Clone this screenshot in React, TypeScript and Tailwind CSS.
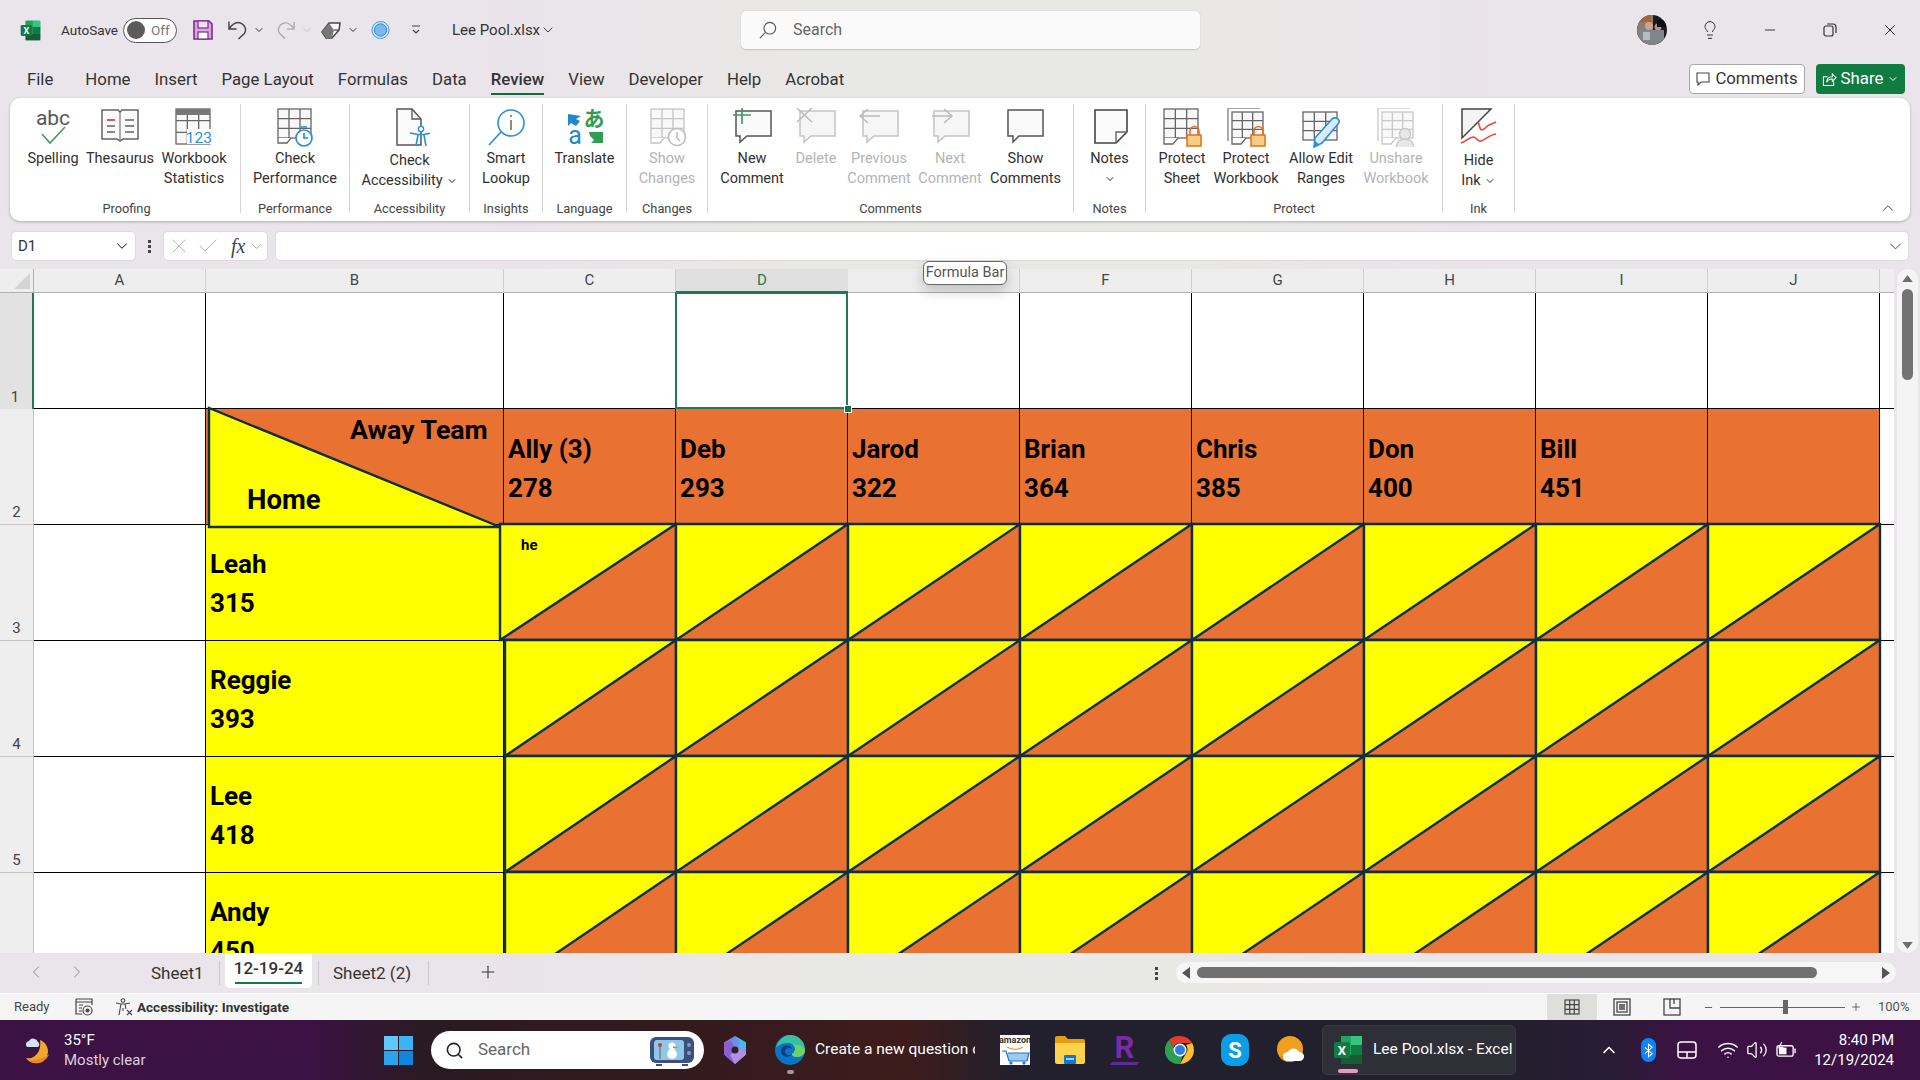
import React from 'react';
import { ChevronDown, ChevronLeft, ChevronRight, ChevronUp, Plus, Minus, X, Check, Wifi, Volume2, Search, Lightbulb } from 'lucide-react';

const DARK = '#10303f';
const ORANGE = '#e97132';
const YELLOW = '#ffff00';

function Icon({ children }: { children: React.ReactNode }) {
  return (
    <svg viewBox="0 0 40 40" className="w-[40px] h-[40px] shrink-0" fill="none">
      {children}
    </svg>
  );
}

function Tbl({ x, y, w, h, c = '#666', fill = '#f8f8f8' }: { x: number; y: number; w: number; h: number; c?: string; fill?: string }) {
  return (
    <g stroke={c} strokeWidth="1.3" fill="none">
      <rect x={x} y={y} width={w} height={h} fill={fill} />
      <path d={`M${x + w / 3} ${y}v${h}M${x + (2 * w) / 3} ${y}v${h}M${x} ${y + h / 3}h${w}M${x} ${y + (2 * h) / 3}h${w}`} />
    </g>
  );
}

function Lock() {
  return (
    <g transform="translate(1.5 1)">
      <path d="M26.5 26v-4a4.5 4.5 0 0 1 9 0v4" stroke="#e0701c" strokeWidth="1.6" />
      <rect x="23.5" y="26" width="14" height="11" fill="#f7cd85" stroke="#e0701c" strokeWidth="1.5" />
    </g>
  );
}

const BUBBLE = 'M4 3h35v25H15l-7 6v-6H4z';

const icons: Record<string, React.ReactNode> = {
  spelling: (
    <Icon>
      <text x="20" y="17" textAnchor="middle" fontSize="21" fill="#555" fontFamily="Roboto, sans-serif">abc</text>
      <path d="M9 26l8 9 15-16" stroke="#3f9b5e" strokeWidth="1.6" />
    </Icon>
  ),
  thesaurus: (
    <Icon>
      <path d="M2 2h16l2 2 2-2h16v29H23l-3 2-3-2H2z" stroke="#666" strokeWidth="1.5" fill="#fbfbfb" />
      <path d="M20 4v28" stroke="#777" strokeWidth="1.2" />
      <path d="M7 12h8" stroke="#e2555b" strokeWidth="2" />
      <path d="M7 18h8M7 24h8M25 12h9M25 18h9M25 24h9" stroke="#888" strokeWidth="2" />
    </Icon>
  ),
  stats: (
    <Icon>
      <Tbl x={2} y={1} w={34} h={35} />
      <rect x="2" y="1" width="34" height="6" fill="#777" />
      <rect x="13" y="21" width="25" height="15" fill="#fff" />
      <text x="38" y="35" textAnchor="end" fontSize="15.500" fill="#2b8fd6" fontFamily="Roboto, sans-serif">123</text>
    </Icon>
  ),
  perf: (
    <Icon>
      <Tbl x={3} y={1} w={33} h={29} />
      <path d="M3 30v5h9l4-5" stroke="#666" strokeWidth="1.3" fill="#fff" />
      <circle cx="29" cy="30" r="8" stroke="#2b8fd6" strokeWidth="1.7" fill="#fff" />
      <path d="M29 25v5h4M26 19h6" stroke="#2b8fd6" strokeWidth="1.7" />
    </Icon>
  ),
  access: (
    <Icon>
      <path d="M7 1h15l9 10v26H7z" stroke="#555" strokeWidth="1.5" fill="#fbfbfb" />
      <path d="M22 1v10h9" stroke="#555" strokeWidth="1.3" />
      <circle cx="31" cy="21" r="2.600" stroke="#2b8fd6" strokeWidth="1.4" fill="#fff" />
      <path d="M20 25l8 1.500h6l7-1.500M28 27l-2 11M34 27l2 11M31 31v3" stroke="#2b8fd6" strokeWidth="1.6" />
    </Icon>
  ),
  lookup: (
    <Icon>
      <circle cx="25" cy="15" r="13" stroke="#2b8fd6" strokeWidth="1.6" fill="#fff" />
      <path d="M15 24L3 37" stroke="#2b8fd6" strokeWidth="1.7" />
      <path d="M25 12v10" stroke="#666" strokeWidth="1.5" />
      <circle cx="25" cy="8" r="1" fill="#666" />
    </Icon>
  ),
  translate: (
    <Icon>
      <path d="M16 8L3 6v12l3-3 5 3 4-5-4-2z" fill="#1f86d0" />
      <text x="29" y="18" textAnchor="middle" fontSize="21" fontWeight="700" fill="#2f9e52" fontFamily="Noto Sans CJK JP, sans-serif">あ</text>
      <text x="10" y="36" textAnchor="middle" fontSize="25" fill="#1f86d0" fontFamily="Roboto, sans-serif">a</text>
      <path d="M24 24h14v11H26l3-3-4-4z" fill="#2f9e52" />
    </Icon>
  ),
  changes: (
    <Icon>
      <Tbl x={4} y={1} w={33} h={29} c="#c4c4c4" />
      <path d="M4 30v5h9l4-5" stroke="#c4c4c4" strokeWidth="1.3" fill="#fff" />
      <circle cx="30" cy="29" r="8.500" stroke="#bdbdbd" strokeWidth="1.6" fill="#fff" />
      <path d="M30 24v6l3 3" stroke="#bdbdbd" strokeWidth="1.5" />
    </Icon>
  ),
  newc: (
    <Icon>
      <path d={BUBBLE} stroke="#555" strokeWidth="1.5" fill="#fafafa" />
      <path d="M10 -1v17M1 7h18" stroke="#3f9b5e" strokeWidth="1.7" />
    </Icon>
  ),
  del: (
    <Icon>
      <path d={BUBBLE} stroke="#c4c4c4" strokeWidth="1.5" fill="#f6f6f6" />
      <path d="M1 0l15 14M16 0L1 14" stroke="#bbb" strokeWidth="1.5" />
    </Icon>
  ),
  prev: (
    <Icon>
      <path d={BUBBLE} stroke="#c4c4c4" strokeWidth="1.5" fill="#f6f6f6" />
      <path d="M21 8H1M9 1L1 8l8 7" stroke="#bbb" strokeWidth="1.5" />
    </Icon>
  ),
  next: (
    <Icon>
      <path d={BUBBLE} stroke="#c4c4c4" strokeWidth="1.5" fill="#f6f6f6" />
      <path d="M2 8h20M14 1l8 7-8 7" stroke="#bbb" strokeWidth="1.5" />
    </Icon>
  ),
  show: (
    <Icon>
      <path d="M2 2h35v26H13l-6 6v-6H2z" stroke="#555" strokeWidth="1.5" fill="#fafafa" />
    </Icon>
  ),
  notes: (
    <Icon>
      <path d="M5 2h32v22L26 35H5z" stroke="#444" strokeWidth="1.6" fill="#fbfbfb" />
      <path d="M37 24H26v11" stroke="#666" strokeWidth="1.4" />
    </Icon>
  ),
  psheet: (
    <Icon>
      <Tbl x={2} y={1} w={34} h={29} />
      <path d="M2 30v6h9l5-6" stroke="#666" strokeWidth="1.3" fill="#fff" />
      <Lock />
    </Icon>
  ),
  pbook: (
    <Icon>
      <path d="M2 33V0h32" stroke="#888" strokeWidth="1.4" />
      <Tbl x={6} y={4} w={31} h={26} />
      <path d="M6 30v6h9l5-6" stroke="#666" strokeWidth="1.3" fill="#fff" />
      <Lock />
    </Icon>
  ),
  ranges: (
    <Icon>
      <Tbl x={2} y={4} w={34} h={28} />
      <path d="M13 39l1-9 17-19c2-2 5-1 6 0s2 3 0 5L21 35z" fill="#d8ecfa" stroke="#2b8fd6" strokeWidth="1.6" />
      <path d="M13 39l1-6 5 4z" fill="#2b8fd6" />
    </Icon>
  ),
  unshare: (
    <Icon>
      <path d="M2 33V0h32" stroke="#ccc" strokeWidth="1.4" />
      <Tbl x={6} y={4} w={31} h={26} c="#c8c8c8" />
      <path d="M6 30v6h9l5-6" stroke="#c8c8c8" strokeWidth="1.3" fill="#fff" />
      <circle cx="29" cy="26" r="5.500" fill="#e8e8e8" stroke="#c8c8c8" strokeWidth="1.4" />
      <path d="M20 39c1-6 4-8 9-8s8 2 9 8" fill="#e8e8e8" stroke="#c8c8c8" strokeWidth="1.4" />
    </Icon>
  ),
  ink: (
    <Icon>
      <path d="M3 1h29L3 30z" fill="#f4f4f4" stroke="#444" strokeWidth="1.5" />
      <path d="M19 14c2 3 1 8 4 8s4-4 7-5 5-2 7-3" stroke="#e8483c" strokeWidth="1.6" />
      <path d="M2 35c5-1 8-6 12-6s4 5 8 4 8-6 15-7" stroke="#e8483c" strokeWidth="1.6" />
    </Icon>
  ),
};

type RibbonItem = { icon: string; lines: string[]; w: string; off?: boolean; chev?: boolean; low?: boolean; chevLine?: boolean };
type RibbonGroup = { label: string; w: string; pl?: string; labelPad?: string; items: RibbonItem[] };

const groups: RibbonGroup[] = [
  {
    label: 'Proofing', w: 'w-[231px]', pl: 'pl-[10px]', labelPad: 'pr-[7px]',
    items: [
      { icon: 'spelling', lines: ['Spelling'], w: 'w-[66px]' },
      { icon: 'thesaurus', lines: ['Thesaurus'], w: 'w-[68px]' },
      { icon: 'stats', lines: ['Workbook', 'Statistics'], w: 'w-[80px]' },
    ],
  },
  { label: 'Performance', w: 'w-[109px]', items: [{ icon: 'perf', lines: ['Check', 'Performance'], w: 'w-[108px]' }] },
  { label: 'Accessibility', w: 'w-[120px]', items: [{ icon: 'access', lines: ['Check', 'Accessibility'], w: 'w-[119px]', chev: true, low: true }] },
  { label: 'Insights', w: 'w-[73px]', items: [{ icon: 'lookup', lines: ['Smart', 'Lookup'], w: 'w-[72px]' }] },
  { label: 'Language', w: 'w-[84px]', items: [{ icon: 'translate', lines: ['Translate'], w: 'w-[83px]' }] },
  { label: 'Changes', w: 'w-[81px]', items: [{ icon: 'changes', lines: ['Show', 'Changes'], w: 'w-[80px]', off: true }] },
  {
    label: 'Comments', w: 'w-[366px]',
    items: [
      { icon: 'newc', lines: ['New', 'Comment'], w: 'w-[88px]' },
      { icon: 'del', lines: ['Delete'], w: 'w-[40px]', off: true },
      { icon: 'prev', lines: ['Previous', 'Comment'], w: 'w-[86px]', off: true },
      { icon: 'next', lines: ['Next', 'Comment'], w: 'w-[56px]', off: true },
      { icon: 'show', lines: ['Show', 'Comments'], w: 'w-[95px]' },
    ],
  },
  { label: 'Notes', w: 'w-[72px]', items: [{ icon: 'notes', lines: ['Notes'], w: 'w-[71px]', chevLine: true }] },
  {
    label: 'Protect', w: 'w-[297px]',
    items: [
      { icon: 'psheet', lines: ['Protect', 'Sheet'], w: 'w-[72px]' },
      { icon: 'pbook', lines: ['Protect', 'Workbook'], w: 'w-[56px]' },
      { icon: 'ranges', lines: ['Allow Edit', 'Ranges'], w: 'w-[94px]' },
      { icon: 'unshare', lines: ['Unshare', 'Workbook'], w: 'w-[56px]', off: true },
    ],
  },
  { label: 'Ink', w: 'w-[72px]', items: [{ icon: 'ink', lines: ['Hide', 'Ink'], w: 'w-[71px]', chev: true, low: true }] },
];

function Ribbon() {
  return (
    <div className="mx-[10px] h-[123px] rounded-[10px] bg-white shadow-[0_1px_3px_rgba(0,0,0,0.25)] flex items-start">
      {groups.map((g) => (
        <div key={g.label} className={`${g.w} ${g.pl ?? ''} shrink-0 mt-[6px] h-[109px] border-r border-[#d4d4d4] flex flex-col`}>
          <div className="h-[95px] flex items-start">
            {g.items.map((it) => (
              <div key={it.icon} className={`${it.w} shrink-0 flex flex-col items-center pt-[4px]`}>
                {icons[it.icon]}
                <div className={`${it.low ? 'mt-[3px]' : 'mt-[1px]'} flex flex-col items-center whitespace-nowrap text-[14.5px] leading-[20px] ${it.off ? 'text-[#b4b4b4]' : 'text-[#303030]'}`}>
                  {it.lines.map((l, i) => (
                    <span key={l} className="flex items-center gap-[3px]">
                      {l}
                      {it.chev && i === it.lines.length - 1 && <ChevronDown size={12} strokeWidth={2} />}
                    </span>
                  ))}
                  {it.chevLine && <ChevronDown size={12} strokeWidth={2} className="mt-[4px] text-[#303030]" />}
                </div>
              </div>
            ))}
          </div>
          <div className={`${g.labelPad ?? ''} h-[14px] leading-[20px] text-center text-[12.800px] text-[#444] whitespace-nowrap`}>{g.label}</div>
        </div>
      ))}
      <ChevronUp size={18} strokeWidth={1.3} className="ml-auto mr-[13px] mt-[101px] text-[#444]" />
    </div>
  );
}

function ExcelLogo({ big }: { big?: boolean }) {
  return (
    <svg viewBox="0 0 30 30" className={big ? 'w-[30px] h-[30px]' : 'w-[21px] h-[21px]'}>
      <rect x="8" y="1" width="21" height="28" rx="2" fill="#21a366" />
      <rect x="18" y="1" width="11" height="9" fill="#33c481" />
      <rect x="8" y="1" width="10" height="9" fill="#21a366" />
      <rect x="18" y="10" width="11" height="10" fill="#107c41" />
      <rect x="8" y="20" width="21" height="9" fill="#185c37" />
      <rect x="1" y="7" width="16" height="16" rx="2" fill="#107c41" />
      <text x="9" y="20" textAnchor="middle" fontSize="13" fontWeight="700" fill="#fff" fontFamily="Roboto, sans-serif">X</text>
    </svg>
  );
}

function TitleBar() {
  return (
    <div className="h-[60px] flex items-center pl-[20px] text-[#333]">
      <ExcelLogo />
      <span className="ml-[20px] w-[54px] text-[13.500px] whitespace-nowrap">AutoSave</span>
      <div className="ml-[8px] w-[54px] h-[25px] rounded-full border border-[#555] bg-white flex items-center pl-[3px] gap-[6px]">
        <span className="w-[18px] h-[18px] rounded-full bg-[#5c5c5c]" />
        <span className="text-[13.500px] text-[#777]">Off</span>
      </div>
      <svg viewBox="0 0 20 20" className="ml-[16px] w-[20px] h-[20px]">
        <path d="M1 1h15l3 3v15H1z" fill="#d8a8df" stroke="#80278f" strokeWidth="1.6" />
        <rect x="5" y="1" width="10" height="7" fill="#f3dff5" stroke="#80278f" strokeWidth="1.2" />
        <rect x="5" y="12" width="10" height="7" fill="#fff" stroke="#80278f" strokeWidth="1.2" />
      </svg>
      <svg viewBox="0 0 20 20" className="ml-[15px] w-[19px] h-[20px]" fill="none" stroke="#444" strokeWidth="1.5">
        <path d="M1 1v8h8M1 9c4-6 9-8 13-6s6 7 3 11l-6 5.500" />
      </svg>
      <ChevronDown size={12} strokeWidth={2} className="ml-[6px]" />
      <svg viewBox="0 0 20 20" className="ml-[12px] w-[18px] h-[20px]" fill="none" stroke="#aaa" strokeWidth="1.5">
        <path d="M19 1v8h-8M19 9c-4-6-9-8-13-6S0 10 3 14l6 5.500" />
      </svg>
      <ChevronDown size={12} strokeWidth={2} className="ml-[6px] text-[#c4c4c4]" />
      <svg viewBox="0 0 20 20" className="ml-[8px] w-[20px] h-[20px]">
        <path d="M8 3h11l-1 7-7 8H5L1 12z" fill="#fff" stroke="#444" strokeWidth="1.5" />
        <path d="M8 3L1 12l4 6h6l2-8z" fill="#777" />
        <path d="M13 10h5" fill="none" stroke="#444" strokeWidth="1.200" />
      </svg>
      <ChevronDown size={12} strokeWidth={2} className="ml-[6px]" />
      <svg viewBox="0 0 20 20" className="ml-[12px] w-[19px] h-[20px]">
        <circle cx="10" cy="10" r="9" fill="#cfe6f8" stroke="#3a96dd" strokeWidth="1" />
        <circle cx="10" cy="10" r="6.500" fill="#7cb8ea" stroke="#2b88d8" strokeWidth="1" />
      </svg>
      <svg viewBox="0 0 12 12" className="ml-[20px] w-[12px] h-[12px]" fill="none" stroke="#444" strokeWidth="1.2">
        <path d="M2 2h8M3 6l3 3 3-3" />
      </svg>
      <span className="ml-[30px] w-[83px] text-[15px] whitespace-nowrap">Lee Pool.xlsx</span>
      <ChevronDown size={16} strokeWidth={1.4} className="ml-[5px]" />
      <div className="ml-[185px] w-[459px] h-[39px] rounded-[5px] bg-white/80 border-b border-[#c8c8c8] shadow-[0_0_1px_rgba(0,0,0,0.3)] flex items-center pl-[18px]">
        <svg viewBox="0 0 20 20" className="w-[18px] h-[18px]" fill="none" stroke="#555" strokeWidth="1.2">
          <circle cx="12" cy="8" r="6.500" />
          <path d="M7 13L1 19" />
        </svg>
        <span className="ml-[16px] text-[16px] text-[#666]">Search</span>
      </div>
      <svg viewBox="0 0 30 30" className="ml-auto w-[30px] h-[30px]">
        <clipPath id="av"><circle cx="15" cy="15" r="15" /></clipPath>
        <g clipPath="url(#av)">
          <rect width="30" height="30" fill="#1c1c22" />
          <rect width="16" height="30" fill="#8a7d72" />
          <rect x="0" y="0" width="14" height="7" fill="#a8643c" />
          <circle cx="12" cy="11" r="4" fill="#c9a58a" />
          <circle cx="21" cy="12" r="3.500" fill="#b9937a" />
          <rect x="3" y="15" width="24" height="15" fill="#7f858a" />
          <rect x="6" y="17" width="7" height="8" fill="#b7bcc0" />
          <rect x="20" y="5" width="9" height="7" fill="#0c0c14" />
        </g>
      </svg>
      <Lightbulb size={20} strokeWidth={1.2} className="ml-[33px]" />
      <Minus size={16} strokeWidth={1.3} className="ml-[42px] text-[#222]" />
      <svg viewBox="0 0 14 14" className="ml-[45px] w-[14px] h-[14px]" fill="none" stroke="#333" strokeWidth="1.2">
        <rect x="1" y="3" width="9" height="10" rx="2" />
        <path d="M4 1h6a3 3 0 0 1 3 3v6" />
      </svg>
      <X size={18} strokeWidth={1.3} className="ml-[44px] mr-[21px] text-[#222]" />
    </div>
  );
}

const tabs = ['Home', 'Insert', 'Page Layout', 'Formulas', 'Data', 'Review', 'View', 'Developer', 'Help', 'Acrobat'];

function TabRow() {
  return (
    <div className="h-[38px] flex items-start pl-[27px] pr-[15px] text-[16.800px] text-[#333]">
      <div className="h-[35px] pt-[6px] leading-[27px] mr-[32px] border-b-2 border-transparent">File</div>
      <div className="flex gap-[24px]">
        {tabs.map((t) => (
          <div key={t} className={`h-[35px] pt-[6px] leading-[27px] whitespace-nowrap border-b-2 ${t === 'Review' ? 'border-[#0f6b3f] font-medium' : 'border-transparent'}`}>
            {t}
          </div>
        ))}
      </div>
      <div className="ml-auto mt-[4px] w-[116px] h-[30px] rounded-[4px] bg-white border border-[#a8a8a8] flex items-center justify-center gap-[5px]">
        <svg viewBox="0 0 14 14" className="w-[14px] h-[14px]" fill="none" stroke="#444" strokeWidth="1.1">
          <path d="M1 1h12v9H5l-3 3v-3H1z" />
        </svg>
        Comments
      </div>
      <div className="ml-[11px] mt-[4px] w-[89px] h-[30px] rounded-[4px] bg-[#107c41] text-white flex items-center justify-center gap-[4px]">
        <svg viewBox="0 0 16 16" className="w-[15px] h-[15px]" fill="none" stroke="#fff" strokeWidth="1.1">
          <path d="M6 5H1.500v9.500h11V10M5 11c0-4 2.500-6 6-6V2l4 4-4 4V7.500c-3 0-5 1-6 3.500z" />
        </svg>
        Share
        <ChevronDown size={12} strokeWidth={2} />
      </div>
    </div>
  );
}

function FormulaBar() {
  return (
    <div className="mt-[10px] h-[30px] flex pl-[11px]">
      <div className="w-[125px] rounded-[5px] bg-white border border-[#dcdcdc] flex items-center pl-[6px] pr-[4px] text-[15px] text-[#333]">
        D1
        <ChevronDown size={18} strokeWidth={1.4} className="ml-auto" />
      </div>
      <div className="w-[27px] flex flex-col items-center justify-center gap-[2px]">
        <span className="w-[3px] h-[3px] bg-[#444]" />
        <span className="w-[3px] h-[3px] bg-[#444]" />
        <span className="w-[3px] h-[3px] bg-[#444]" />
      </div>
      <div className="w-[105px] rounded-[5px] bg-white border border-[#dcdcdc] flex items-center pl-[3px] text-[#b5b5b5]">
        <X size={24} strokeWidth={1} />
        <Check size={24} strokeWidth={1} className="ml-[5px]" />
        <span className="ml-[11px] text-[20px] text-[#444] italic [font-family:'Liberation_Serif',serif]">fx</span>
        <ChevronDown size={15} strokeWidth={1.2} className="ml-[4px] text-[#888]" />
      </div>
      <div className="ml-[7px] w-[1634px] rounded-[5px] bg-white border border-[#dcdcdc] flex items-center justify-end pr-[3px]">
        <ChevronDown size={19} strokeWidth={1.2} className="text-[#444]" />
      </div>
    </div>
  );
}

function Tri({ className }: { className: string }) {
  return (
    <svg viewBox="0 0 172 116" preserveAspectRatio="none" className={`absolute -top-[1px] h-[116px] overflow-visible ${className}`}>
      <rect width="172" height="116" fill={ORANGE} />
      <polygon points="0,116 0,0 172,0" fill={YELLOW} />
      <path d="M0 0H172V116H0ZM0 116L172 0" fill="none" stroke={DARK} strokeWidth="2.400" />
    </svg>
  );
}

const columns = ['A', 'B', 'C', 'D', 'E', 'F', 'G', 'H', 'I', 'J'];
const home = [
  ['Ally (3)', '278'], ['Deb', '293'], ['Jarod', '322'], ['Brian', '364'],
  ['Chris', '385'], ['Don', '400'], ['Bill', '451'], null,
];
const away: [string, string, string][] = [
  ['3', 'Leah', '315'], ['4', 'Reggie', '393'], ['5', 'Lee', '418'], ['6', 'Andy', '450'],
];

function Sheet() {
  return (
    <div className="w-[1894px] h-[684px] overflow-hidden grid grid-cols-[34px_172px_298px_172px_172px_172px_172px_172px_172px_172px_172px_14px] grid-rows-[24px_116px_116px_116px_116px_116px_116px] bg-white">
      <div className="bg-[#eeeeee] border-b border-r border-[#b0b0b0] flex items-end justify-end pb-[3px] pr-[3px]">
        <svg viewBox="0 0 16 16" className="w-[16px] h-[16px]"><polygon points="16,0 16,16 0,16" fill="#d4d4d4" /></svg>
      </div>
      {columns.map((c) => (
        <div key={c} className={`text-[15px] text-center leading-[23px] ${c === 'D' ? 'bg-[#e0e0e0] text-[#1f7a4f] border-b-2 border-[#1f7a4f]' : 'bg-[#eeeeee] text-[#444] border-b border-r border-b-[#b0b0b0] border-r-[#cfcfcf]'}`}>
          {c}
        </div>
      ))}
      <div className="bg-[#eeeeee] border-b border-[#b0b0b0]" />

      <div className="bg-[#e2e2e2] border-r-2 border-[#1f7a4f] text-[15px] text-[#444] flex items-end justify-center pb-[1px] pr-[2px]">1</div>
      <div className="border-r border-b border-black" />
      <div className="border-r border-b border-black" />
      <div className="border-r border-b border-black" />
      <div className="relative border-r border-b border-black">
        <div className="absolute -left-[1px] -top-[1px] -right-[1px] -bottom-[1px] border-2 border-[#1f7a4f]" />
        <div className="absolute -right-[4px] -bottom-[4px] w-[6px] h-[6px] bg-[#1f6b46] outline outline-1 outline-white" />
      </div>
      {['E', 'F', 'G', 'H', 'I', 'J'].map((c) => (
        <div key={c} className="border-r border-b border-black" />
      ))}
      <div className="border-b border-black" />

      <div className="bg-[#eeeeee] border-r border-b border-[#c4c4c4] text-[15px] text-[#444] flex items-end justify-center pb-[1px]">2</div>
      <div className="border-r border-b border-black" />
      <div className="relative border-r border-b border-black bg-[#e97132]">
        <svg viewBox="0 0 298 116" className="absolute left-0 top-0 w-[298px] h-[116px] overflow-visible">
          <polygon points="3,-1 3,118 294,118" fill={YELLOW} stroke={DARK} strokeWidth="2.400" />
        </svg>
        <span className="absolute left-[144px] top-[6px] text-[26.700px] leading-[30px] font-bold whitespace-nowrap text-black">Away Team</span>
        <span className="absolute left-[41px] top-[76px] text-[27.500px] leading-[30px] font-bold text-black">Home</span>
      </div>
      {home.map((h, i) => (
        <div key={i} className="bg-[#e97132] border-r border-b border-black pl-[4px] pt-[21px] text-[26px] leading-[38.500px] font-bold text-black whitespace-nowrap">
          {h && (
            <>
              <div>{h[0]}</div>
              <div>{h[1]}</div>
            </>
          )}
        </div>
      ))}
      <div className="border-b border-black" />

      {away.map(([row, name, score]) => (
        <React.Fragment key={row}>
          <div className="bg-[#eeeeee] border-r border-b border-[#c4c4c4] text-[15px] text-[#444] flex items-end justify-center pb-[1px]">{row}</div>
          <div className="border-r border-b border-black" />
          <div className="bg-[#ffff00] border-r border-b border-black pl-[4px] pt-[20px] text-[26px] leading-[38.500px] font-bold text-black">
            <div>{name}</div>
            <div>{score}</div>
          </div>
          {home.map((_, i) => (
            <div key={i} className="relative">
              <Tri className={i === 0 ? (row === '3' ? '-left-[4px] w-[176px]' : 'left-[1px] w-[171px]') : 'left-0 w-[172px]'} />
              {i === 0 && row === '3' && <span className="absolute left-[17px] top-[9px] text-[15px] font-bold text-black">he</span>}
            </div>
          ))}
          <div className="border-b border-black" />
        </React.Fragment>
      ))}
    </div>
  );
}

function VScroll() {
  return (
    <div className="w-[26px] pl-[3px] h-[684px]">
      <div className="w-[21px] h-full rounded-full bg-[#f4f4f4] flex flex-col items-center pt-[6px] pb-[4px]">
        <svg viewBox="0 0 12 8" className="w-[11px] h-[7px]"><polygon points="6,0 12,8 0,8" fill="#6e6e6e" /></svg>
        <div className="mt-[7px] w-[11px] h-[91px] rounded-full bg-[#737373]" />
        <svg viewBox="0 0 12 8" className="mt-auto w-[11px] h-[7px]"><polygon points="0,0 12,0 6,8" fill="#6e6e6e" /></svg>
      </div>
    </div>
  );
}

function SheetTabs() {
  return (
    <div className="h-[40px] flex items-start text-[17px] text-[#333]">
      <ChevronLeft size={20} strokeWidth={1.2} className="ml-[26px] mt-[9px] text-[#888]" />
      <ChevronRight size={20} strokeWidth={1.2} className="ml-[21px] mt-[9px] text-[#888]" />
      <span className="ml-[64px] mt-[7px] w-[53px] leading-[26px] whitespace-nowrap">Sheet1</span>
      <span className="ml-[15px] mt-[8px] w-px h-[24px] bg-[#c8c8c8]" />
      <div className="ml-[5px] w-[87px] h-[35px] rounded-b-[5px] bg-white flex flex-col items-center pt-[4px]">
        <span className="leading-[22px] whitespace-nowrap font-medium">12-19-24</span>
        <span className="mt-[3px] w-[67px] h-[2px] bg-[#107c41]" />
      </div>
      <span className="ml-[6px] mt-[8px] w-px h-[24px] bg-[#c8c8c8]" />
      <span className="ml-[14px] mt-[7px] w-[78px] leading-[26px] whitespace-nowrap">Sheet2 (2)</span>
      <span className="ml-[17px] mt-[8px] w-px h-[24px] bg-[#c8c8c8]" />
      <Plus size={20} strokeWidth={1.3} className="ml-[49px] mt-[9px]" />
      <div className="ml-[657px] mt-[14px] flex flex-col gap-[2px]">
        <span className="w-[3px] h-[3px] bg-[#444]" />
        <span className="w-[3px] h-[3px] bg-[#444]" />
        <span className="w-[3px] h-[3px] bg-[#444]" />
      </div>
      <div className="ml-[18px] mt-[9px] w-[720px] h-[21px] rounded-full bg-[#f6f6f6] flex items-center pl-[6px]">
        <svg viewBox="0 0 8 12" className="w-[8px] h-[12px]"><polygon points="8,0 8,12 0,6" fill="#555" /></svg>
        <div className="ml-[7px] w-[620px] h-[11px] rounded-full bg-[#707070]" />
        <svg viewBox="0 0 8 12" className="ml-[65px] w-[8px] h-[12px]"><polygon points="0,0 0,12 8,6" fill="#555" /></svg>
      </div>
    </div>
  );
}

function StatusBar() {
  return (
    <div className="h-[27px] bg-[#f5f5f5] border-t border-white flex items-center pl-[14px] text-[#444] text-[13px]">
      <span className="w-[36px]">Ready</span>
      <svg viewBox="0 0 18 18" className="ml-[25px] w-[18px] h-[18px]" fill="none" stroke="#444" strokeWidth="1.2">
        <path d="M1 1h16v6M1 4h16M1 1v15h6" />
        <path d="M4 7h4M4 10h3M4 13h3" />
        <circle cx="12.500" cy="12.500" r="4.500" />
        <circle cx="12.500" cy="12.500" r="1.500" fill="#444" />
      </svg>
      <svg viewBox="0 0 18 18" className="ml-[22px] w-[18px] h-[18px]" fill="none" stroke="#444" strokeWidth="1.1">
        <circle cx="8" cy="2.500" r="1.800" />
        <path d="M1 5l5 1h4l5-1M6 6L4 17M10 6l1 5M8 10v3" />
        <path d="M12 12l5 5M17 12l-5 5" />
      </svg>
      <span className="ml-[4px] font-bold text-[13.500px] text-[#333] whitespace-nowrap">Accessibility: Investigate</span>
      <div className="ml-auto flex items-center h-full">
        <div className="w-[50px] h-full bg-[#dededc] flex items-center justify-center">
          <svg viewBox="0 0 16 16" className="w-[16px] h-[16px]" fill="none" stroke="#444" strokeWidth="1.2">
            <rect x="1" y="1" width="14" height="14" />
            <path d="M5.700 1v14M10.300 1v14M1 5.700h14M1 10.300h14" />
          </svg>
        </div>
        <svg viewBox="0 0 18 18" className="ml-[16px] w-[18px] h-[18px]" fill="none" stroke="#444" strokeWidth="1.3">
          <rect x="1" y="1" width="16" height="16" />
          <rect x="4" y="4" width="10" height="10" />
          <path d="M6 7h6M6 9h6M6 11h6" />
        </svg>
        <svg viewBox="0 0 18 18" className="ml-[32px] w-[18px] h-[18px]" fill="none" stroke="#444" strokeWidth="1.3">
          <rect x="1" y="1" width="16" height="16" />
          <path d="M7 1v9h10M11 1v5" />
        </svg>
        <Minus size={11} strokeWidth={1.8} className="ml-[22px]" />
        <div className="ml-[6px] w-[125px] h-[14px] flex items-center">
          <span className="w-[63px] h-px bg-[#666]" />
          <span className="w-[5px] h-[14px] bg-[#666]" />
          <span className="w-[57px] h-px bg-[#666]" />
        </div>
        <Plus size={12} strokeWidth={1.5} className="ml-[5px]" />
        <span className="ml-[16px] mr-[11px] w-[31px] text-[13px] text-[#555]">100%</span>
      </div>
    </div>
  );
}

function Taskbar() {
  return (
    <div className="h-[60px] bg-[linear-gradient(90deg,#3c1244_0%,#3c1244_16%,#2a1a22_22%,#331a1e_35%,#3e1c1c_47%,#22202c_53%,#22202c_78%,#2a1c36_84%,#3c1244_88%,#3c1244_100%)] flex items-center text-white">
      <svg viewBox="0 0 30 28" className="ml-[24px] w-[30px] h-[28px]">
        <path d="M16 4a12 12 0 1 1-14 18c8 2 16-6 14-18z" fill="#f0a82a" />
        <path d="M4 24c5 1 15-1 21-6-2 6-8 10-14 9-3 0-5-1-7-3z" fill="#e8862a" />
        <path d="M3 11a3.500 3.500 0 0 1 2-6 5 5 0 0 1 9 1 3 3 0 0 1 0 5z" fill="#cfe4f8" />
      </svg>
      <div className="ml-[10px] w-[320px] shrink-0 flex flex-col text-[15px] leading-[20px]">
        <span>35°F</span>
        <span className="text-[#ddd0dd]">Mostly clear</span>
      </div>
      <svg viewBox="0 0 29 29" className="w-[29px] h-[29px]">
        <rect x="0" y="0" width="14" height="14" fill="#5cc8fb" />
        <rect x="15" y="0" width="14" height="14" fill="#3cb4f3" />
        <rect x="0" y="15" width="14" height="14" fill="#2ba4ec" />
        <rect x="15" y="15" width="14" height="14" fill="#0f86dc" />
      </svg>
      <div className="ml-[18px] w-[273px] h-[38px] rounded-full bg-white flex items-center pl-[14px] text-[#666] text-[17px]">
        <Search size={19} strokeWidth={2} className="text-[#222]" />
        <span className="ml-[14px]">Search</span>
        <svg viewBox="0 0 46 36" className="ml-[119px] w-[46px] h-[36px]">
          <rect x="1" y="5" width="44" height="26" rx="6" fill="#3d4f7c" />
          <rect x="5" y="8" width="30" height="20" rx="3" fill="#8fc8e8" />
          <circle cx="23" cy="22" r="5" fill="#fff" />
          <circle cx="23" cy="14" r="3.500" fill="#fff" />
          <path d="M24 14l6 2-6 0z" fill="#e8762a" />
          <path d="M11 27V13" stroke="#7a5a3a" strokeWidth="1" />
          <circle cx="11" cy="13" r="2" fill="#d23a3a" />
          <path d="M7 33h6M33 33h6" stroke="#3d4f7c" strokeWidth="2" />
          <circle cx="40" cy="13" r="2" fill="#8a9ac0" />
          <circle cx="40" cy="21" r="2" fill="#8a9ac0" />
        </svg>
      </div>
      <svg viewBox="0 0 26 30" className="ml-[18px] w-[26px] h-[30px]">
        <path d="M13 1l11 6.500v12L13 29 2 19.500v-12z" fill="#6f8fe6" />
        <path d="M13 1l11 6.500v9l-7-4V6z" fill="#47b8ee" />
        <path d="M2 7.500l7-2 4 8-4 6 4 9.500L2 19.500z" fill="#8a5fd0" />
        <path d="M17 13l7 3.500v3L13 29l-5-9z" fill="#b48de6" />
        <circle cx="13" cy="15" r="3.500" fill="#2d2030" />
      </svg>
      <div className="ml-[27px] w-[30px] flex flex-col items-center relative h-[60px] justify-center">
        <svg viewBox="0 0 30 30" className="w-[30px] h-[30px]">
          <circle cx="15" cy="15" r="15" fill="#0c74c4" />
          <path d="M1 13C3 4 10 0 15 0c8 0 15 6 15 15 0 4-3 7-8 7-3 0-5-1-5-3 2-1 3-3 3-5 0-4-4-6-7-6-6 0-11 3-12 5z" fill="#34c2a2" />
          <path d="M17 19c-1 2-5 4-8 2-4-2-4-8 0-10 3-2 8 0 8 3-5-3-9 2-6 5 2 2 4 1 6 0z" fill="#0a3f86" />
          <path d="M30 15c0 4-3 7-8 7-3 0-5-1-5-3 2-1 3-3 3-5 0-2-1-3-2-4 6-1 10 1 12 5z" fill="#6ed26a" />
        </svg>
        <span className="absolute bottom-[6px] w-[7px] h-[4px] rounded-full bg-[#9a9a9a]" />
      </div>
      <div className="ml-[10px] w-[160px] overflow-hidden whitespace-nowrap text-[15.500px]">Create a new question or start a discussion</div>
      <div className="ml-[25px] w-[30px] h-[30px] bg-white flex flex-col items-center overflow-hidden">
        <span className="text-[9px] leading-[11px] font-bold text-[#333]">amazon</span>
        <svg viewBox="0 0 30 19" className="w-[30px] h-[19px]">
          <path d="M7 1c5 3 11 3 16 0" stroke="#f29a2e" strokeWidth="1.200" fill="none" />
          <path d="M2 5h4l3 10h18l2-8H8" fill="#9cc9ee" stroke="#1f77c8" strokeWidth="1.200" />
          <circle cx="11" cy="17" r="1.600" fill="#1f77c8" />
          <circle cx="24" cy="17" r="1.600" fill="#1f77c8" />
        </svg>
      </div>
      <svg viewBox="0 0 30 28" className="ml-[25px] w-[30px] h-[28px]">
        <path d="M0 2a2 2 0 0 1 2-2h8l3 3h15a2 2 0 0 1 2 2v4H0z" fill="#e0a010" />
        <path d="M0 7h30v19a2 2 0 0 1-2 2H2a2 2 0 0 1-2-2z" fill="#ffd24d" />
        <rect x="9" y="19" width="12" height="9" rx="1" fill="#0f78d4" />
        <rect x="11" y="22" width="8" height="2" fill="#9fd2f8" />
      </svg>
      <div className="ml-[26px] w-[27px] h-[32px] flex flex-col items-center">
        <span className="text-[31px] leading-[28px] font-bold text-[#7a2aa8]">R</span>
        <span className="w-[27px] h-[3px] bg-[#5c2a9c] -skew-x-45" />
      </div>
      <svg viewBox="0 0 30 30" className="ml-[27px] w-[30px] h-[30px]">
        <path d="M15 1a14 14 0 0 1 12.100 7H15a7 7 0 0 0-6.500 4.500L4 5a14 14 0 0 1 11-4z" fill="#e33b2e" />
        <path d="M27.100 8A14 14 0 0 1 15 29l6-10.500a7 7 0 0 0 0-8.500z" fill="#fbc02d" />
        <path d="M15 29A14 14 0 0 1 4 5l5.500 9.500a7 7 0 0 0 8 6.500z" fill="#2e9e4f" />
        <circle cx="15" cy="15" r="6.500" fill="#fff" />
        <circle cx="15" cy="15" r="5" fill="#2f7de1" />
      </svg>
      <div className="ml-[26px] w-[28px] h-[32px] rounded-[10px] bg-[#0a9ee8] flex items-center justify-center text-[22px] font-bold">S</div>
      <svg viewBox="0 0 28 30" className="ml-[28px] w-[28px] h-[30px]">
        <circle cx="13" cy="14" r="13" fill="#f0a020" />
        <path d="M13 27a13 13 0 0 1-11-6h20a13 13 0 0 1-9 6z" fill="#e88a1a" />
        <path d="M10 26a4.500 4.500 0 0 1 1-9 6 6 0 0 1 11 0 4.500 4.500 0 0 1 1 9z" fill="#fff" />
      </svg>
      <div className="ml-[17px] w-[194px] h-[50px] rounded-[5px] bg-[#2f2f38] border border-[#3a3a44] flex items-center pl-[10px] relative">
        <ExcelLogo big />
        <span className="ml-[10px] text-[15.500px] whitespace-nowrap">Lee Pool.xlsx - Excel</span>
        <span className="absolute left-[15px] bottom-[1px] w-[20px] h-[4px] rounded-full bg-[#e79ac7]" />
      </div>
      <ChevronUp size={20} strokeWidth={2} className="ml-[83px]" />
      <div className="ml-[22px] w-[15px] h-[24px] rounded-full bg-[#0a84ff] flex items-center justify-center">
        <svg viewBox="0 0 10 16" className="w-[9px] h-[15px]" fill="none" stroke="#fff" strokeWidth="1.200">
          <path d="M1 4.500l8 7-4 3.500V1l4 3.500-8 7" />
        </svg>
      </div>
      <svg viewBox="0 0 20 18" className="ml-[21px] w-[20px] h-[18px]" fill="none" stroke="#fff" strokeWidth="1.500">
        <rect x="1" y="1" width="18" height="16" rx="3" />
        <path d="M1 11h18M10 11v6" />
      </svg>
      <Wifi size={22} strokeWidth={1.6} className="ml-[20px]" />
      <Volume2 size={22} strokeWidth={1.4} className="ml-[7px]" />
      <svg viewBox="0 0 22 20" className="ml-[8px] w-[21px] h-[19px]" fill="none" stroke="#fff" strokeWidth="1.400">
        <rect x="1" y="5" width="17" height="11" rx="2" />
        <path d="M20 8v5" />
        <path d="M3 7h8v7H3z" fill="#fff" stroke="none" />
        <path d="M6 1L3 7h4l-2 5" strokeWidth="1.200" />
      </svg>
      <div className="ml-auto mr-[26px] flex flex-col items-end text-[15px] leading-[20px]">
        <span>8:40 PM</span>
        <span>12/19/2024</span>
      </div>
    </div>
  );
}

export default function App() {
  return (
    <div className="w-[1920px] h-[1080px] overflow-hidden relative flex flex-col bg-[linear-gradient(90deg,#eae4eb_0%,#eae4eb_25%,#e8e8e5_42%,#e8e8e5_62%,#eae4eb_78%,#eae4eb_100%)] [font-family:Roboto,'Liberation_Sans',sans-serif]">
      <TitleBar />
      <TabRow />
      <Ribbon />
      <FormulaBar />
      <div className="mt-[8px] flex">
        <Sheet />
        <VScroll />
      </div>
      <SheetTabs />
      <StatusBar />
      <Taskbar />
      <div className="absolute left-[923px] top-[261px] w-[84px] h-[24px] rounded-[6px] bg-white border border-[#666] shadow-[0_6px_14px_rgba(0,0,0,0.2)] flex items-center justify-center text-[14.500px] text-[#555] whitespace-nowrap">
        Formula Bar
      </div>
    </div>
  );
}
